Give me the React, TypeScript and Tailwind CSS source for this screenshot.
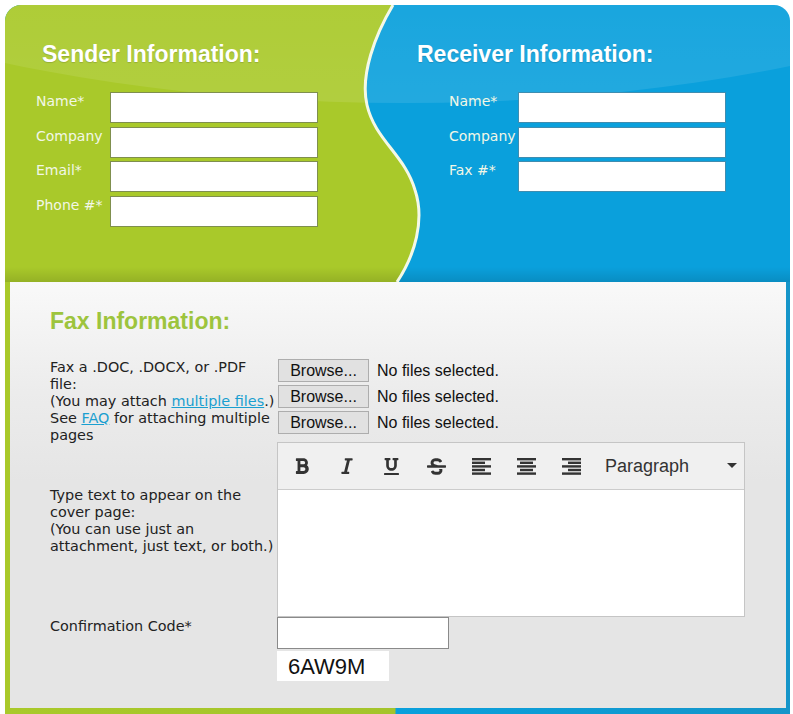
import React from 'react'
import { FaBold, FaItalic, FaUnderline, FaStrikethrough } from 'react-icons/fa'

const GREEN = '#a9c92a'
const BLUE = '#0aa0dc'

// wavy green/blue backdrop behind the two address blocks
const WaveBackdrop = () => (
  <svg
    className="absolute inset-0 h-full w-full"
    viewBox="0 0 785 277"
    preserveAspectRatio="none"
    xmlns="http://www.w3.org/2000/svg"
  >
    <defs>
      <linearGradient id="gloss" x1="0" y1="0" x2="0" y2="1">
        <stop offset="0" stopColor="#fff" stopOpacity="0" />
        <stop offset="0.6" stopColor="#fff" stopOpacity="0.02" />
        <stop offset="1" stopColor="#fff" stopOpacity="0.1" />
      </linearGradient>
      <linearGradient id="shade" x1="0" y1="0" x2="0" y2="1">
        <stop offset="0" stopColor="#000" stopOpacity="0" />
        <stop offset="1" stopColor="#000" stopOpacity="0.12" />
      </linearGradient>
    </defs>
    <rect x="0" y="0" width="785" height="277" fill={BLUE} />
    <path
      d="M0,0 L388,0 C370,30 355,70 362,100 C370,135 400,150 410,185 C420,215 410,250 392,277 L0,277 Z"
      fill={GREEN}
    />
    <ellipse cx="400" cy="-170" rx="760" ry="268" fill="url(#gloss)" />
    <rect x="0" y="262" width="785" height="15" fill="url(#shade)" />
    <path
      d="M388,0 C370,30 355,70 362,100 C370,135 400,150 410,185 C420,215 410,250 392,277"
      fill="none"
      stroke="#f4f8e6"
      strokeWidth="3"
    />
  </svg>
)

type FieldProps = { label: string; labelW: string; border: string }

const Field = ({ label, labelW, border }: FieldProps) => (
  <div className="flex items-start">
    <span className={`${labelW} pt-[1px] text-[14px] leading-[17px] text-[#f2f7e6]`}>{label}</span>
    <input className={`h-[31px] w-[208px] border bg-white ${border}`} />
  </div>
)

const AlignIcon = ({ mode }: { mode: 'left' | 'center' | 'right' }) => {
  const rows = [19, 13, 19, 13, 19]
  return (
    <svg width="19" height="17" viewBox="0 0 19 17">
      {rows.map((w, i) => {
        const x = mode === 'left' ? 0 : mode === 'right' ? 19 - w : (19 - w) / 2
        return <rect key={i} x={x} y={i * 3.6} width={w} height="2.4" fill="#333" />
      })}
    </svg>
  )
}

const FileRow = () => (
  <div className="flex items-center">
    <button className="h-[23px] w-[91px] border border-[#adadad] bg-[#e1e1e1] text-[16px] leading-none text-[#111]">
      Browse...
    </button>
    <span className="ml-[8px] text-[16px] leading-none text-[#111]">No files selected.</span>
  </div>
)

export default function App() {
  const toolBtn = 'flex h-full w-[45px] items-center justify-center text-[#333]'
  return (
    <div
      className="h-[714px] w-[793px] overflow-hidden bg-white pl-[5px] pt-[5px]"
      style={{ fontFamily: '"DejaVu Sans", Verdana, sans-serif' }}
    >
      <div className="w-[785px]">
        {/* top: sender / receiver */}
        <div className="relative h-[277px] overflow-hidden rounded-t-[16px]">
          <WaveBackdrop />
          <div className="relative flex">
            <div className="w-[406px] pl-[31px] pt-[35px]">
              <h2 className="ml-[6px] text-[23px] font-bold leading-[28px] text-white [font-family:'Liberation_Sans',Arial,sans-serif] [text-shadow:0_1px_1px_rgba(0,0,0,0.15)]">
                Sender Information:
              </h2>
              <div className="mt-[24px] flex flex-col gap-[3.5px]">
                <Field label="Name*" labelW="w-[74px]" border="border-[#7f8f4e]" />
                <Field label="Company" labelW="w-[74px]" border="border-[#7f8f4e]" />
                <Field label="Email*" labelW="w-[74px]" border="border-[#7f8f4e]" />
                <Field label="Phone #*" labelW="w-[74px]" border="border-[#7f8f4e]" />
              </div>
            </div>
            <div className="flex-1 pt-[35px]">
              <h2 className="ml-[6px] text-[23px] font-bold leading-[28px] text-white [font-family:'Liberation_Sans',Arial,sans-serif] [text-shadow:0_1px_1px_rgba(0,0,0,0.15)]">
                Receiver Information:
              </h2>
              <div className="ml-[38px] mt-[24px] flex flex-col gap-[3.5px]">
                <Field label="Name*" labelW="w-[69px]" border="border-[#3f8db0]" />
                <Field label="Company" labelW="w-[69px]" border="border-[#3f8db0]" />
                <Field label="Fax #*" labelW="w-[69px]" border="border-[#3f8db0]" />
              </div>
            </div>
          </div>
        </div>

        {/* bottom: fax info panel framed in green / blue */}
        <div className="bg-[linear-gradient(90deg,#a9c92a_0,#a4c42c_390px,#0aa0dc_391px,#1595c9_100%)] pb-[6px] pl-[5px] pr-[4px]">
          <div className="h-[426px] bg-[linear-gradient(180deg,#f9f9f9_0px,#ececec_110px,#e5e5e5_200px,#e5e5e5_100%)] pl-[40px] pt-[25px] text-[14.4px] leading-[17px] text-[#222]">
            <h2 className="text-[23px] font-bold leading-[28px] text-[#9dc43d] [font-family:'Liberation_Sans',Arial,sans-serif]">
              Fax Information:
            </h2>

            <div className="mt-[24px] flex h-[75px]">
              <div className="w-[227px] whitespace-nowrap">
                Fax a .DOC, .DOCX, or .PDF
                <br />
                file:
                <br />
                (You may attach{' '}
                <a href="#" className="text-[#1a9fd0] underline">
                  multiple files
                </a>
                .)
                <br />
                See{' '}
                <a href="#" className="text-[#1a9fd0] underline">
                  FAQ
                </a>{' '}
                for attaching multiple
                <br />
                pages
              </div>
              <div className="flex flex-col gap-[3px] pl-[1px] [font-family:'Liberation_Sans',Arial,sans-serif]">
                <FileRow />
                <FileRow />
                <FileRow />
              </div>
            </div>

            <div className="mt-[8px] flex">
              <div className="w-[227px] whitespace-nowrap pt-[45px]">
                Type text to appear on the
                <br />
                cover page:
                <br />
                (You can use just an
                <br />
                attachment, just text, or both.)
              </div>
              <div className="h-[175px] w-[468px] border border-[#c5c5c5] bg-white">
                <div className="flex h-[47px] items-center border-b border-[#cccccc] bg-[#f0f0f0] pl-[1px]">
                  <span className={toolBtn}>
                    <FaBold size={18} />
                  </span>
                  <span className={toolBtn}>
                    <FaItalic size={18} />
                  </span>
                  <span className={toolBtn}>
                    <FaUnderline size={17} />
                  </span>
                  <span className={toolBtn}>
                    <FaStrikethrough size={19} />
                  </span>
                  <span className={toolBtn}>
                    <AlignIcon mode="left" />
                  </span>
                  <span className={toolBtn}>
                    <AlignIcon mode="center" />
                  </span>
                  <span className={toolBtn}>
                    <AlignIcon mode="right" />
                  </span>
                  <span className="ml-[11px] w-[122px] text-[18px] text-[#333] [font-family:'Liberation_Sans',Arial,sans-serif]">
                    Paragraph
                  </span>
                  <svg width="10" height="6" viewBox="0 0 10 6">
                    <path d="M0,0 L10,0 L5,5 Z" fill="#333" />
                  </svg>
                </div>
              </div>
            </div>

            <div className="flex">
              <div className="w-[227px] pt-[1px]">Confirmation Code*</div>
              <div className="flex flex-col gap-[2px]">
                <input className="h-[32px] w-[172px] border border-[#8a8a8a] bg-white" />
                <div className="flex h-[30px] w-[112px] items-center bg-white pl-[11px] text-[22px] text-[#111] [font-family:'Liberation_Sans',Arial,sans-serif]">
                  6AW9M
                </div>
              </div>
            </div>
          </div>
        </div>
      </div>
    </div>
  )
}
